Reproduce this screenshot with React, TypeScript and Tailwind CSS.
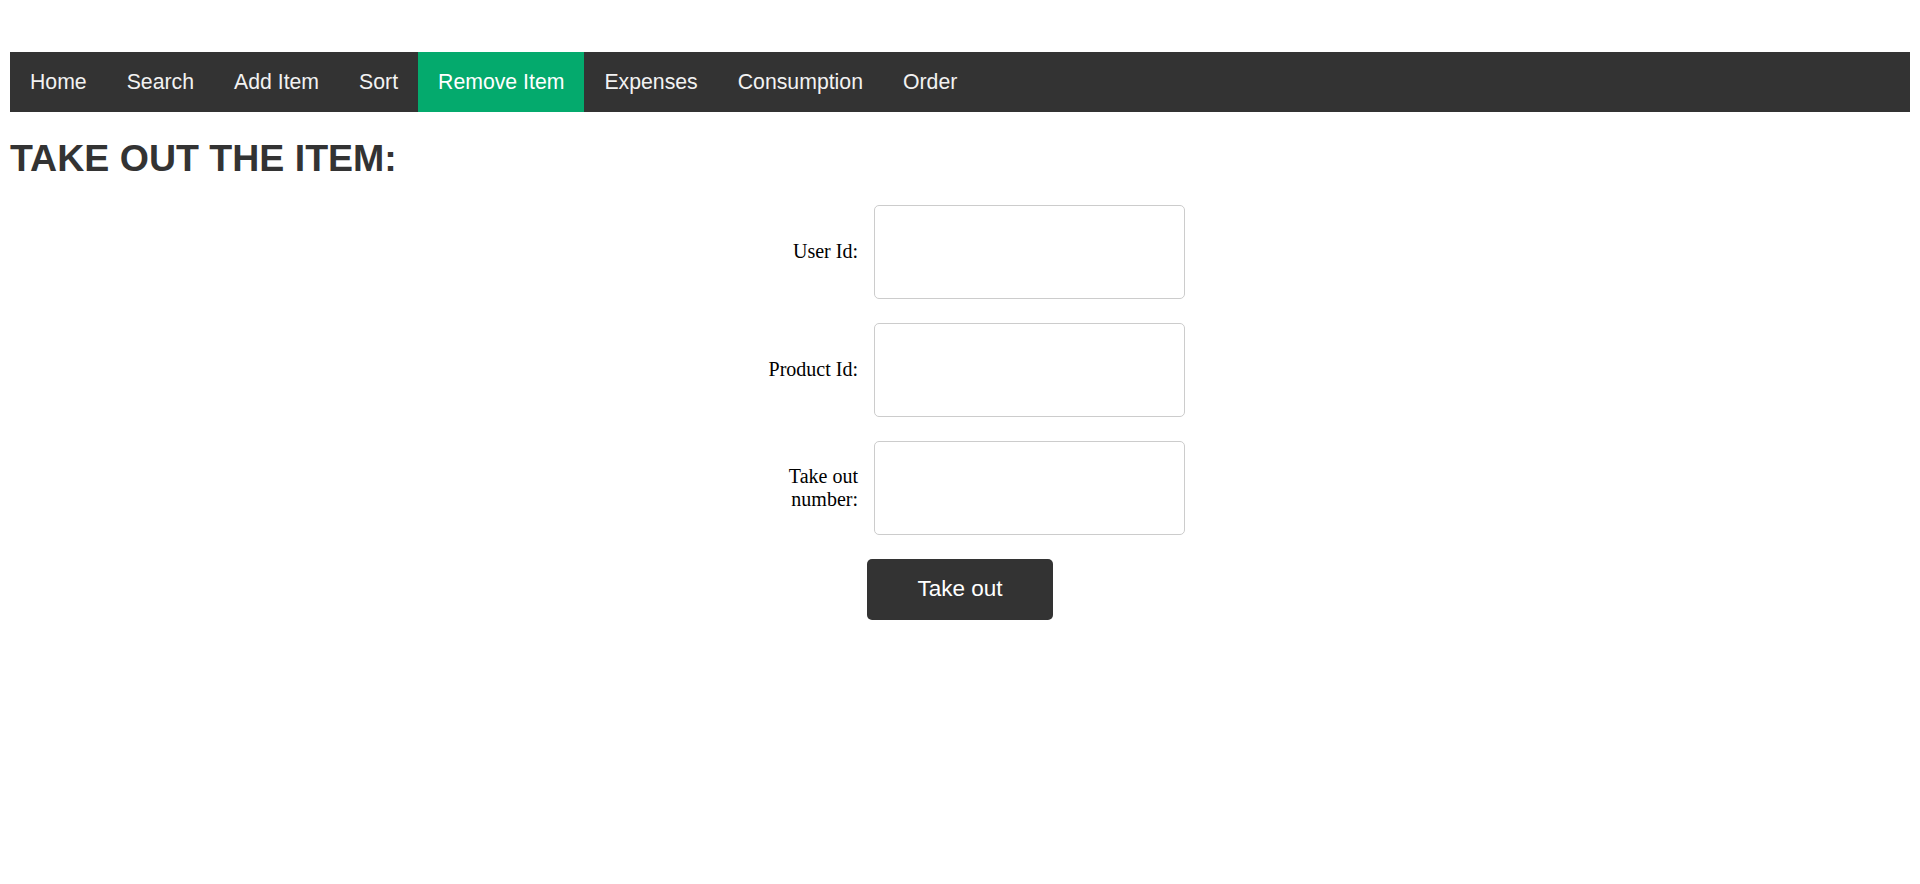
import React from "react";

const navItems = [
  "Home",
  "Search",
  "Add Item",
  "Sort",
  "Remove Item",
  "Expenses",
  "Consumption",
  "Order",
];

function Field({ label }: { label: string }) {
  return (
    <div className="flex items-center">
      <label className="w-[139px] shrink-0 pr-[16px] text-right text-[20px] leading-[23px] text-black [font-family:'Liberation_Serif','Times_New_Roman',serif]">
        {label}
      </label>
      <input
        type="text"
        className="h-[94px] w-[311px] rounded-[5px] border border-[#cccccc] bg-white px-[15px] outline-none"
      />
    </div>
  );
}

export default function App() {
  return (
    <div className="min-h-[884px] bg-white px-[10px] pt-[10px] [font-family:'Liberation_Sans',Arial,sans-serif]">
      <nav className="mt-[41.7px] flex h-[60px] items-stretch bg-[#333333]">
        {navItems.map((item) => (
          <a
            key={item}
            href="#"
            className={`flex items-center px-[20px] text-[21.25px] leading-[24px] text-[#f2f2f2] ${
              item === "Remove Item" ? "bg-[#04AA6D] text-white" : ""
            }`}
          >
            {item}
          </a>
        ))}
      </nav>
      <h2 className="mt-[25px] text-[37.5px] font-bold leading-[43px] text-[#333333]">
        TAKE OUT THE ITEM:
      </h2>
      <form className="mx-auto mt-[25px] flex w-[450px] flex-col gap-[24px]">
        <Field label="User Id:" />
        <Field label="Product Id:" />
        <Field label="Take out number:" />
        <div className="flex justify-center">
          <button
            type="button"
            className="h-[61px] w-[186px] rounded-[5px] bg-[#333333] text-[22.5px] text-white"
          >
            Take out
          </button>
        </div>
      </form>
    </div>
  );
}
